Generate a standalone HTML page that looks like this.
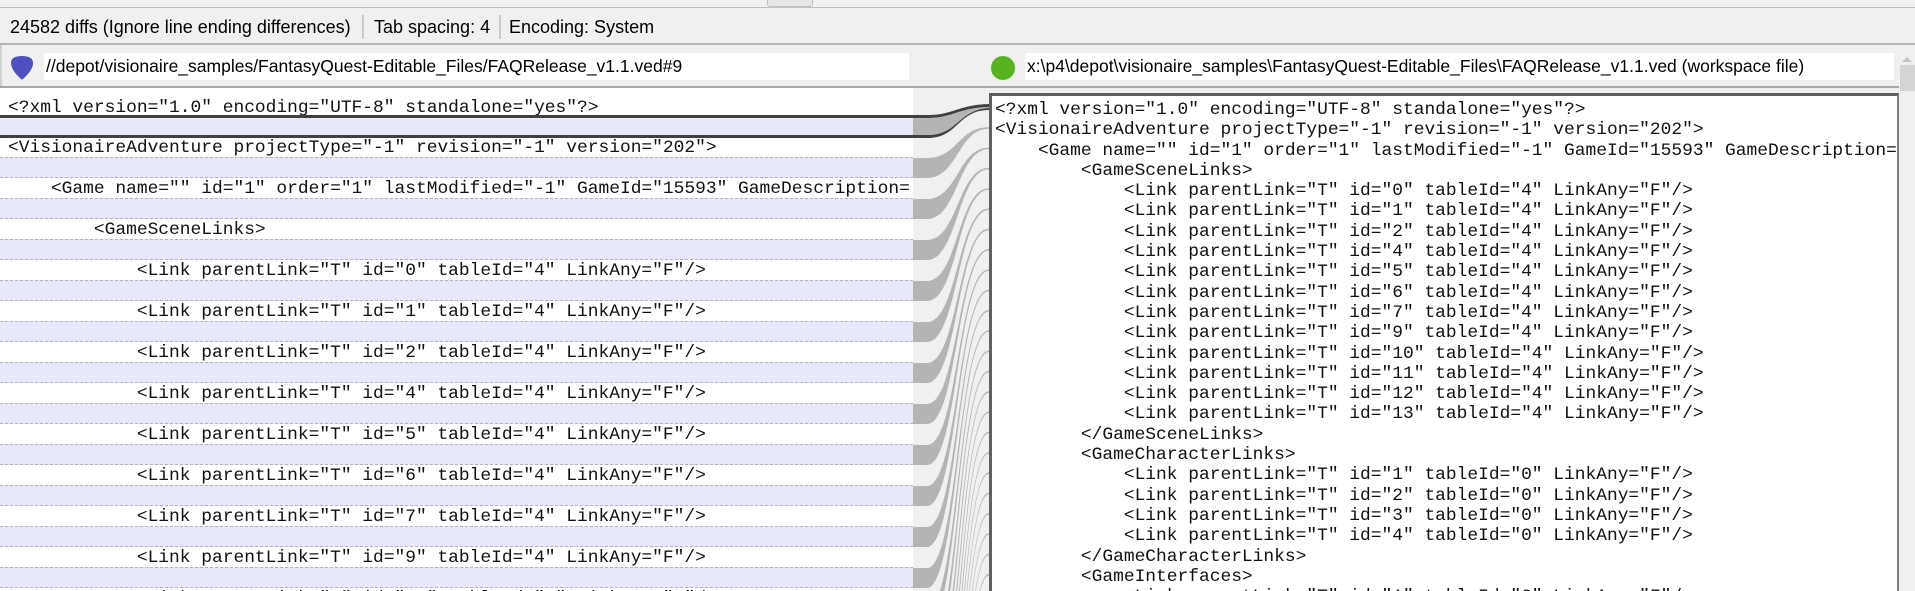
<!DOCTYPE html>
<html><head><meta charset="utf-8"><style>
*{margin:0;padding:0;box-sizing:border-box}
html,body{width:1915px;height:591px;overflow:hidden}
body{background:#f0f0f0;position:relative;font-family:"Liberation Sans",sans-serif}
.abs{position:absolute}
.mono{font-family:"Liberation Mono",monospace;font-size:17.9px;white-space:pre;color:#111}
.tb{top:14px;font-size:18px;color:#000;line-height:26px}
.sep{top:15px;width:2px;height:24px;background:#c8c8c8}
.box{background:#fff;height:27px;top:53px;font-size:17.5px;line-height:27px;padding-left:2px;white-space:pre}
.lrow{position:absolute;left:0;width:913px;height:20.5px;line-height:20.5px;padding-left:8px}
.lav{background:#e8e8fc;border-top:1.5px dashed #b4b4b4;border-bottom:1.5px dashed #b4b4b4}
</style></head><body>
<div class="abs" style="left:0;top:7px;width:1915px;height:1px;background:#c0c0c0"></div>
<div class="abs" style="left:767px;top:0;width:46px;height:7px;background:#e6e6e6;border:1px solid #c0c0c0;border-top:none;border-radius:0 0 3px 3px"></div>
<div class="abs tb" style="left:10px">24582 diffs (Ignore line ending differences)</div>
<div class="abs sep" style="left:362px"></div>
<div class="abs tb" style="left:374px">Tab spacing: 4</div>
<div class="abs sep" style="left:499px"></div>
<div class="abs tb" style="left:509px">Encoding: System</div>
<div class="abs" style="left:0;top:43px;width:1915px;height:2px;background:#b4b4b4"></div>
<div class="abs" style="left:0;top:45px;width:2px;height:43px;background:#d0d0d0"></div>
<svg class="abs" style="left:9px;top:55px" width="26" height="26"><path d="M2 8 Q2 1 13 1 Q24 1 24 8 Q24 15 14 24 Q13 25 12 24 Q2 15 2 8Z" fill="#4f4fc2"/></svg>
<div class="abs box" style="left:44px;width:865px">//depot/visionaire_samples/FantasyQuest-Editable_Files/FAQRelease_v1.1.ved#9</div>
<div class="abs" style="left:991px;top:56px;width:24px;height:24px;border-radius:50%;background:#58b41e"></div>
<div class="abs box" style="left:1025px;width:869px">x:\p4\depot\visionaire_samples\FantasyQuest-Editable_Files\FAQRelease_v1.1.ved (workspace file)</div>
<div class="abs" style="left:0;top:86px;width:1899px;height:2px;background:#a8a8a8"></div>
<div class="abs" style="left:1899px;top:45px;width:16px;height:546px;background:#f0f0f0"></div>
<svg class="abs" style="left:1900px;top:54px" width="14" height="10"><path d="M2 8 L7 3 L12 8Z" fill="#c4c4c4"/></svg>
<div class="abs" style="left:1900px;top:65px;width:15px;height:26px;background:#d4d4d4"></div>
<div class="abs mono" style="left:0;top:88px;width:913px;height:503px;background:#fff;overflow:hidden">
<div class="lrow" style="top:9.5px">&lt;?xml version="1.0" encoding="UTF-8" standalone="yes"?&gt;</div>
<div class="lrow" style="top:27px;height:23px;background:#e8e8fc;border-top:3px solid #404040;border-bottom:3px solid #404040"></div>
<div class="lrow" style="top:50px">&lt;VisionaireAdventure projectType="-1" revision="-1" version="202"&gt;</div>
<div class="lrow lav" style="top:69px"></div>
<div class="lrow" style="top:91px">    &lt;Game name="" id="1" order="1" lastModified="-1" GameId="15593" GameDescription=</div>
<div class="lrow lav" style="top:110px"></div>
<div class="lrow" style="top:132px">        &lt;GameSceneLinks&gt;</div>
<div class="lrow lav" style="top:151px"></div>
<div class="lrow" style="top:173px">            &lt;Link parentLink="T" id="0" tableId="4" LinkAny="F"/&gt;</div>
<div class="lrow lav" style="top:192px"></div>
<div class="lrow" style="top:214px">            &lt;Link parentLink="T" id="1" tableId="4" LinkAny="F"/&gt;</div>
<div class="lrow lav" style="top:233px"></div>
<div class="lrow" style="top:255px">            &lt;Link parentLink="T" id="2" tableId="4" LinkAny="F"/&gt;</div>
<div class="lrow lav" style="top:274px"></div>
<div class="lrow" style="top:296px">            &lt;Link parentLink="T" id="4" tableId="4" LinkAny="F"/&gt;</div>
<div class="lrow lav" style="top:315px"></div>
<div class="lrow" style="top:337px">            &lt;Link parentLink="T" id="5" tableId="4" LinkAny="F"/&gt;</div>
<div class="lrow lav" style="top:356px"></div>
<div class="lrow" style="top:378px">            &lt;Link parentLink="T" id="6" tableId="4" LinkAny="F"/&gt;</div>
<div class="lrow lav" style="top:397px"></div>
<div class="lrow" style="top:419px">            &lt;Link parentLink="T" id="7" tableId="4" LinkAny="F"/&gt;</div>
<div class="lrow lav" style="top:438px"></div>
<div class="lrow" style="top:460px">            &lt;Link parentLink="T" id="9" tableId="4" LinkAny="F"/&gt;</div>
<div class="lrow lav" style="top:479px"></div>
<div class="lrow" style="top:501px">            &lt;Link parentLink="T" id="10" tableId="4" LinkAny="F"/&gt;</div>
</div>
<svg class="abs" style="left:913px;top:88px" width="76" height="503">
<rect width="76" height="503" fill="#f0f0f0"/>
<g fill="#b4b4b4" id="bands"></g>
<path d="M0 27 L15 27 C40 27 45 17 76 16 L76 19 C45 20 40 30 15 30 L0 30Z" fill="#404040"/>
<path d="M0 47 L15 47 C45 47 45 20 76 19 L76 22 C45 22 45 50 15 50 L0 50Z" fill="#404040"/>
<path d="M0 30 L15 30 C40 30 45 20 76 19 L76 20 C45 22 45 47 15 47 L0 47Z" fill="#b4b4b4"/>
</svg>
<script>
(function(){var g=document.getElementById('bands'),s='';
for(var k=1;k<30;k++){var y1=69+41*(k-1)+1,y2=y1+20,yr=19+20.3*k;
s+='<path d="M0 '+y1+' L14 '+y1+' C45 '+y1+' 45 '+yr+' 76 '+yr+' L76 '+(yr+1.5)+' C45 '+(yr+1.5)+' 45 '+y2+' 14 '+y2+' L0 '+y2+'Z"/>';}
g.innerHTML=s;})();
</script>
<div class="abs mono" style="left:989px;top:93px;width:910px;height:498px;background:#fff;border-left:3px solid #606060;border-top:3px solid #606060;border-right:2px solid #808080;overflow:hidden;line-height:20.3px;padding:4px 0 0 3px">&lt;?xml version="1.0" encoding="UTF-8" standalone="yes"?&gt;
&lt;VisionaireAdventure projectType="-1" revision="-1" version="202"&gt;
    &lt;Game name="" id="1" order="1" lastModified="-1" GameId="15593" GameDescription=
        &lt;GameSceneLinks&gt;
            &lt;Link parentLink="T" id="0" tableId="4" LinkAny="F"/&gt;
            &lt;Link parentLink="T" id="1" tableId="4" LinkAny="F"/&gt;
            &lt;Link parentLink="T" id="2" tableId="4" LinkAny="F"/&gt;
            &lt;Link parentLink="T" id="4" tableId="4" LinkAny="F"/&gt;
            &lt;Link parentLink="T" id="5" tableId="4" LinkAny="F"/&gt;
            &lt;Link parentLink="T" id="6" tableId="4" LinkAny="F"/&gt;
            &lt;Link parentLink="T" id="7" tableId="4" LinkAny="F"/&gt;
            &lt;Link parentLink="T" id="9" tableId="4" LinkAny="F"/&gt;
            &lt;Link parentLink="T" id="10" tableId="4" LinkAny="F"/&gt;
            &lt;Link parentLink="T" id="11" tableId="4" LinkAny="F"/&gt;
            &lt;Link parentLink="T" id="12" tableId="4" LinkAny="F"/&gt;
            &lt;Link parentLink="T" id="13" tableId="4" LinkAny="F"/&gt;
        &lt;/GameSceneLinks&gt;
        &lt;GameCharacterLinks&gt;
            &lt;Link parentLink="T" id="1" tableId="0" LinkAny="F"/&gt;
            &lt;Link parentLink="T" id="2" tableId="0" LinkAny="F"/&gt;
            &lt;Link parentLink="T" id="3" tableId="0" LinkAny="F"/&gt;
            &lt;Link parentLink="T" id="4" tableId="0" LinkAny="F"/&gt;
        &lt;/GameCharacterLinks&gt;
        &lt;GameInterfaces&gt;
            &lt;Link parentLink="T" id="1" tableId="2" LinkAny="F"/&gt;</div>
</body></html>
